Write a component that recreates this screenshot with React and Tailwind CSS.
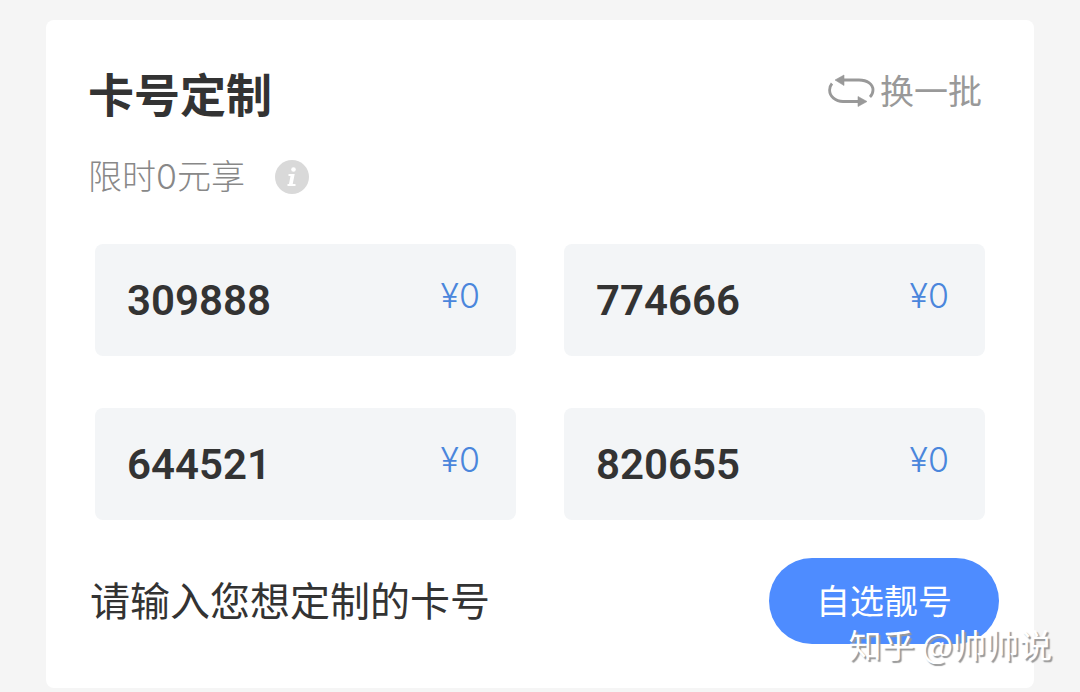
const numbers = ["309888", "774666", "644521", "820655"];

function SwapIcon() {
  return (
    <svg className="h-9 w-12" viewBox="0 0 48 36" fill="none" aria-hidden="true">
      <path
        d="M14 8H31C39.500 8 45 12.500 45 18C45 20.800 44 23 42 25M4 11.500C2.300 13.500 1.600 15.500 1.600 18C1.600 24.500 7.500 29.500 15 29.500H31"
        stroke="#999999"
        strokeWidth="2.8"
      />
      <path d="M7 8L16 3V13.500ZM39 29.500L30 24.500V34.500Z" fill="#999999" stroke="#999999" strokeWidth="0.600" />
    </svg>
  );
}

function InfoIcon() {
  return (
    <svg className="h-[34px] w-[34px]" viewBox="0 0 34 34" aria-hidden="true">
      <circle cx="17" cy="17" r="17" fill="#d9d9d9" />
      <circle cx="18.500" cy="9.500" r="2.300" fill="#fff" />
      <path d="M13.500 14H19.700L17.700 24H20.500V26H12.500V24H14L15.500 16H13.500Z" fill="#fff" />
    </svg>
  );
}

function NumberCard({ value }) {
  return (
    <button
      type="button"
      className="flex h-28 items-start justify-between rounded-lg bg-[#f3f5f7] pr-9 pl-8 pt-7"
    >
      <span className="font-[Roboto,sans-serif] text-[42px] leading-[58px] font-semibold text-[#333333]">
        {value}
      </span>
      <span className="font-[Inter,sans-serif] text-[34px] leading-[48px] font-light text-[#4a86dc]">¥0</span>
    </button>
  );
}

export default function App() {
  return (
    <div className="relative min-h-screen bg-[#f5f5f5] px-[46px] pt-5 pb-1 font-['Noto_Sans_CJK_SC',sans-serif]">
      <main className="rounded-lg bg-white px-[42px] pt-10 pb-11">
        <header className="flex items-start justify-between">
          <h1 className="text-[46px] leading-[64px] font-bold text-[#333333]">卡号定制</h1>
          <button type="button" className="mt-1 mr-2.5 flex items-center gap-1 text-[34px] leading-[52px] text-[#999999]">
            <SwapIcon />
            换一批
          </button>
        </header>
        <div className="mt-7 flex items-center gap-[30px]">
          <p className="font-[Inter,'Noto_Sans_CJK_SC',sans-serif] text-[34px] leading-[50px] font-light text-[#888888]">
            限时0元享
          </p>
          <button type="button" aria-label="说明">
            <InfoIcon />
          </button>
        </div>
        <section className="mx-[7px] mt-[42px] grid grid-cols-2 gap-x-12 gap-y-[52px]">
          {numbers.map((n) => (
            <NumberCard key={n} value={n} />
          ))}
        </section>
        <form className="mt-[38px] -mr-[7px] flex items-center justify-between gap-6" onSubmit={(e) => e.preventDefault()}>
          <input
            type="text"
            aria-label="卡号"
            placeholder="请输入您想定制的卡号"
            className="mb-1 h-16 min-w-0 flex-1 bg-transparent pl-0.5 text-[40px] text-[#333333] outline-none placeholder:text-[#333333] placeholder:opacity-100"
          />
          <button type="submit" className="h-[86px] w-[230px] shrink-0 rounded-full bg-[#4e8cff] pb-1 text-[34px] text-white">
            自选靓号
          </button>
        </form>
      </main>
      <p className="pointer-events-none absolute right-7 bottom-6 text-[33px] leading-[48px] text-white [text-shadow:2px_2px_1px_#999999]">
        知乎 @帅帅说
      </p>
    </div>
  );
}
